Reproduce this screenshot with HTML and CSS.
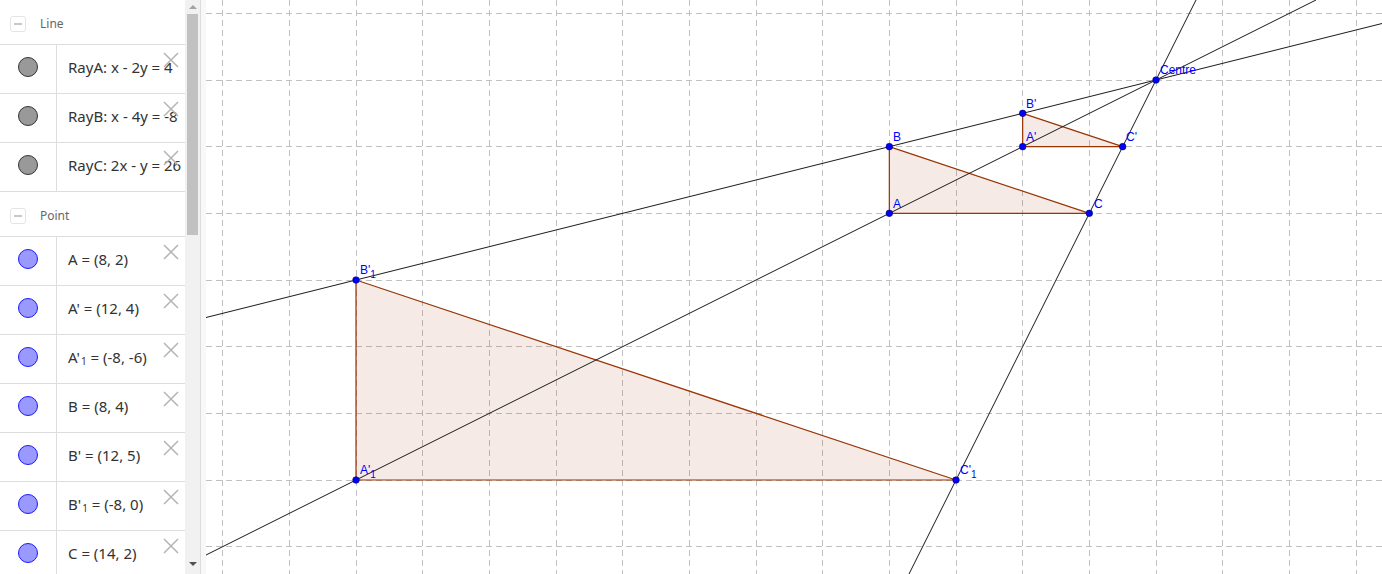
FILE: index.html
```html
<!DOCTYPE html>
<html>
<head>
<meta charset="utf-8">
<link rel="stylesheet" href="styles.css">
</head>
<body>
<div class="app">
  <aside class="algebra">
    <div class="list">
      <div class="group-header"><span class="toggle"><span class="minus"></span></span><span class="group-title">Line</span></div>
      <div class="item"><div class="marble-cell"><span class="marble line"></span></div><div class="content">RayA: x - 2y = 4</div><span class="close"><svg viewBox="0 0 16 16"><path d="M1 1L15 15M15 1L1 15"/></svg></span></div>
      <div class="item"><div class="marble-cell"><span class="marble line"></span></div><div class="content">RayB: x - 4y = -8</div><span class="close"><svg viewBox="0 0 16 16"><path d="M1 1L15 15M15 1L1 15"/></svg></span></div>
      <div class="item"><div class="marble-cell"><span class="marble line"></span></div><div class="content">RayC: 2x - y = 26</div><span class="close"><svg viewBox="0 0 16 16"><path d="M1 1L15 15M15 1L1 15"/></svg></span></div>
      <div class="group-header"><span class="toggle"><span class="minus"></span></span><span class="group-title">Point</span></div>
      <div class="item"><div class="marble-cell"><span class="marble point"></span></div><div class="content">A = (8, 2)</div><span class="close"><svg viewBox="0 0 16 16"><path d="M1 1L15 15M15 1L1 15"/></svg></span></div>
      <div class="item"><div class="marble-cell"><span class="marble point"></span></div><div class="content">A' = (12, 4)</div><span class="close"><svg viewBox="0 0 16 16"><path d="M1 1L15 15M15 1L1 15"/></svg></span></div>
      <div class="item"><div class="marble-cell"><span class="marble point"></span></div><div class="content">A'<sub>1</sub> = (-8, -6)</div><span class="close"><svg viewBox="0 0 16 16"><path d="M1 1L15 15M15 1L1 15"/></svg></span></div>
      <div class="item"><div class="marble-cell"><span class="marble point"></span></div><div class="content">B = (8, 4)</div><span class="close"><svg viewBox="0 0 16 16"><path d="M1 1L15 15M15 1L1 15"/></svg></span></div>
      <div class="item"><div class="marble-cell"><span class="marble point"></span></div><div class="content">B' = (12, 5)</div><span class="close"><svg viewBox="0 0 16 16"><path d="M1 1L15 15M15 1L1 15"/></svg></span></div>
      <div class="item"><div class="marble-cell"><span class="marble point"></span></div><div class="content">B'<sub>1</sub> = (-8, 0)</div><span class="close"><svg viewBox="0 0 16 16"><path d="M1 1L15 15M15 1L1 15"/></svg></span></div>
      <div class="item"><div class="marble-cell"><span class="marble point"></span></div><div class="content">C = (14, 2)</div><span class="close"><svg viewBox="0 0 16 16"><path d="M1 1L15 15M15 1L1 15"/></svg></span></div>
    </div>
    <div class="scrollbar">
      <span class="arrow up"></span>
      <div class="track"><div class="thumb"></div></div>
      <span class="arrow down"></span>
    </div>
    <div class="splitter"></div>
  </aside>
  <main class="canvas">
    <svg class="graphics" viewBox="206 0 1176 574" preserveAspectRatio="none">
      <g class="grid">
        <line x1="222.5" y1="0" x2="222.5" y2="574"/>
        <line x1="289.5" y1="0" x2="289.5" y2="574"/>
        <line x1="356.5" y1="0" x2="356.5" y2="574"/>
        <line x1="422.5" y1="0" x2="422.5" y2="574"/>
        <line x1="489.5" y1="0" x2="489.5" y2="574"/>
        <line x1="556.5" y1="0" x2="556.5" y2="574"/>
        <line x1="622.5" y1="0" x2="622.5" y2="574"/>
        <line x1="689.5" y1="0" x2="689.5" y2="574"/>
        <line x1="756.5" y1="0" x2="756.5" y2="574"/>
        <line x1="822.5" y1="0" x2="822.5" y2="574"/>
        <line x1="889.5" y1="0" x2="889.5" y2="574"/>
        <line x1="956.5" y1="0" x2="956.5" y2="574"/>
        <line x1="1022.5" y1="0" x2="1022.5" y2="574"/>
        <line x1="1089.5" y1="0" x2="1089.5" y2="574"/>
        <line x1="1156.5" y1="0" x2="1156.5" y2="574"/>
        <line x1="1222.5" y1="0" x2="1222.5" y2="574"/>
        <line x1="1289.5" y1="0" x2="1289.5" y2="574"/>
        <line x1="1356.5" y1="0" x2="1356.5" y2="574"/>
        <line x1="206" y1="13.5" x2="1382" y2="13.5"/>
        <line x1="206" y1="80.5" x2="1382" y2="80.5"/>
        <line x1="206" y1="146.5" x2="1382" y2="146.5"/>
        <line x1="206" y1="213.5" x2="1382" y2="213.5"/>
        <line x1="206" y1="280.5" x2="1382" y2="280.5"/>
        <line x1="206" y1="346.5" x2="1382" y2="346.5"/>
        <line x1="206" y1="413.5" x2="1382" y2="413.5"/>
        <line x1="206" y1="480.5" x2="1382" y2="480.5"/>
        <line x1="206" y1="546.5" x2="1382" y2="546.5"/>
      </g>
      <g class="triangles">
        <polygon points="889.33,213.33 889.33,146.67 1089.33,213.33"/>
        <polygon points="1022.67,146.67 1022.67,113.33 1122.67,146.67"/>
        <polygon points="356,480 356,280 956,480"/>
      </g>
      <g class="rays">
        <line x1="206" y1="555" x2="1316" y2="0"/>
        <line x1="206" y1="317.5" x2="1382" y2="23.5"/>
        <line x1="909" y1="574" x2="1196" y2="0"/>
      </g>
      <g class="points">
        <circle cx="889.33" cy="213.33" r="3.3"/>
        <circle cx="889.33" cy="146.67" r="3.3"/>
        <circle cx="1089.33" cy="213.33" r="3.3"/>
        <circle cx="1022.67" cy="146.67" r="3.3"/>
        <circle cx="1022.67" cy="113.33" r="3.3"/>
        <circle cx="1122.67" cy="146.67" r="3.3"/>
        <circle cx="356" cy="480" r="3.3"/>
        <circle cx="356" cy="280" r="3.3"/>
        <circle cx="956" cy="480" r="3.3"/>
        <circle cx="1156" cy="80" r="3.3"/>
      </g>
      <g class="labels">
        <text x="893" y="208">A</text>
        <text x="893" y="141">B</text>
        <text x="1094" y="208">C</text>
        <text x="1026" y="141">A'</text>
        <text x="1026" y="108">B'</text>
        <text x="1126" y="141">C'</text>
        <text x="1160" y="74">Centre</text>
        <text x="360" y="274">B'<tspan class="sub" dy="4">1</tspan></text>
        <text x="360" y="474">A'<tspan class="sub" dy="4">1</tspan></text>
        <text x="960" y="474">C'<tspan class="sub" dy="4">1</tspan></text>
      </g>
    </svg>
  </main>
</div>
</body>
</html>
```

FILE: styles.css
```css
html, body {
  margin: 0;
  padding: 0;
  background: #fff;
  overflow: hidden;
}

.app {
  display: flex;
  width: 1382px;
  height: 574px;
  font-family: "Noto Sans", "Liberation Sans", sans-serif;
}

.algebra {
  display: flex;
  width: 206px;
  height: 574px;
  flex: none;
  background: #fff;
}

.list {
  width: 185px;
  height: 574px;
  overflow: hidden;
  flex: none;
}

.group-header {
  height: 44px;
  border-bottom: 1px solid #dddddd;
  display: flex;
  align-items: center;
  padding-left: 10px;
  box-sizing: content-box;
}

.toggle {
  width: 14px;
  height: 14px;
  border: 1px solid #e4e4e4;
  border-radius: 3px;
  display: flex;
  align-items: center;
  justify-content: center;
  margin-top: 3px;
}

.minus {
  width: 8px;
  height: 2px;
  background: #c8c8c8;
}

.group-title {
  margin-left: 14px;
  font-size: 12px;
  color: #666;
  margin-top: 2px;
}

.item {
  position: relative;
  display: flex;
  height: 48px;
  border-bottom: 1px solid #dddddd;
}

.marble-cell {
  width: 57px;
  flex: none;
  border-right: 1px solid #dddddd;
  display: flex;
  justify-content: center;
  padding-top: 12px;
  padding-right: 1px;
  box-sizing: border-box;
}

.marble {
  width: 20px;
  height: 20px;
  border-radius: 50%;
  box-sizing: border-box;
}

.marble.line {
  background: #999999;
  border: 1px solid #333;
}

.marble.point {
  background: #9999ff;
  border: 1px solid #1a1aff;
}

.content {
  padding-left: 11px;
  padding-top: 12px;
  font-size: 15px;
  line-height: 20px;
  color: #333;
  white-space: nowrap;
}

.content sub {
  font-size: 10px;
  vertical-align: -2px;
  line-height: 0;
  margin-left: 1px;
}

.close {
  position: absolute;
  right: 6px;
  top: 7px;
  width: 16px;
  height: 16px;
}

.close svg {
  display: block;
  width: 16px;
  height: 16px;
}

.close path {
  stroke: #b4b4b4;
  stroke-width: 1.5;
  fill: none;
}

.scrollbar {
  width: 15px;
  flex: none;
  background: #f1f1f1;
  display: flex;
  flex-direction: column;
  align-items: center;
}

.arrow {
  width: 0;
  height: 0;
  border-left: 4px solid transparent;
  border-right: 4px solid transparent;
  flex: none;
}

.arrow.up {
  border-bottom: 4px solid #a3a3a3;
  margin-top: 5px;
  margin-bottom: 5px;
}

.arrow.down {
  border-top: 4px solid #505050;
  margin-top: 4px;
  margin-bottom: 8px;
}

.track {
  flex: 1;
  width: 100%;
  display: flex;
  justify-content: center;
}

.thumb {
  width: 11px;
  height: 221px;
  background: #c1c1c1;
}

.splitter {
  width: 6px;
  flex: none;
  background: #f8f8f8;
  border-left: 1px solid #dcdcdc;
  box-sizing: border-box;
}

.canvas {
  flex: 1;
  height: 574px;
  background: #fff;
}

.graphics {
  display: block;
  width: 1176px;
  height: 574px;
}

.grid line {
  stroke: #c0c0c0;
  stroke-width: 1;
  stroke-dasharray: 6 4;
}

.triangles polygon {
  fill: rgba(153, 51, 0, 0.1);
  stroke: #993300;
  stroke-width: 1.2;
}

.rays line {
  stroke: #1a1a1a;
  stroke-width: 1;
}

.points circle {
  fill: #0000ff;
  stroke: #000066;
  stroke-width: 0.6;
}

.labels text {
  font-family: "Liberation Sans", Arial, sans-serif;
  font-size: 12px;
  fill: #0000ff;
}

.labels .sub {
  font-size: 10px;
}
```
